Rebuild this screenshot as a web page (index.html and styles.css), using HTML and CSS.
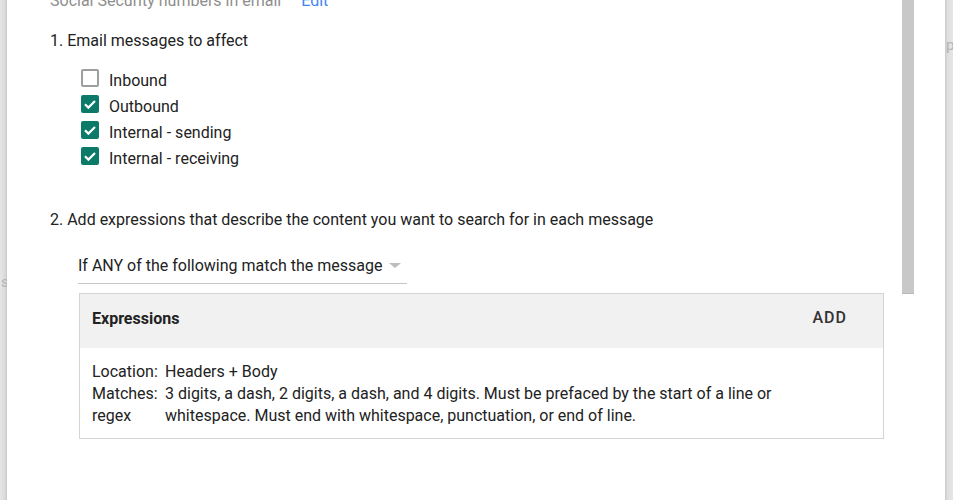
FILE: index.html
```html
<!DOCTYPE html>
<html lang="en">
<head>
  <meta charset="UTF-8" />
  <title>Content compliance</title>
  <link rel="stylesheet" href="styles.css">
</head>
<body>
  <div class="page">
    <div class="side side-left"><span class="ghost">s</span></div>

    <div class="dialog">
      <div class="scroll-thumb"></div>

      <div class="content">
        <p class="summary">Social Security numbers in email <a class="edit" href="#">Edit</a></p>

        <p class="step step-one">1. Email messages to affect</p>
        <ul class="checklist">
          <li class="check-row"><span class="box"></span>Inbound</li>
          <li class="check-row"><span class="box checked"><svg viewBox="0 0 18 18"><path d="M4 9.2l3.4 3.4L14 6" /></svg></span>Outbound</li>
          <li class="check-row"><span class="box checked"><svg viewBox="0 0 18 18"><path d="M4 9.2l3.4 3.4L14 6" /></svg></span>Internal - sending</li>
          <li class="check-row"><span class="box checked"><svg viewBox="0 0 18 18"><path d="M4 9.2l3.4 3.4L14 6" /></svg></span>Internal - receiving</li>
        </ul>

        <p class="step step-two">2. Add expressions that describe the content you want to search for in each message</p>

        <div class="select">
          <span>If ANY of the following match the message</span>
          <span class="caret"></span>
        </div>

        <div class="expressions">
          <div class="expr-head">
            <span class="expr-title">Expressions</span>
            <span class="expr-add">ADD</span>
          </div>
          <div class="expr-body">
            <span class="expr-label">Location:</span>
            <span class="expr-value">Headers + Body</span>
            <span class="expr-label">Matches:<br>regex</span>
            <span class="expr-value">3 digits, a dash, 2 digits, a dash, and 4 digits. Must be prefaced by the start of a line or whitespace. Must end with whitespace, punctuation, or end of line.</span>
          </div>
        </div>
      </div>
    </div>

    <div class="side side-right"><span class="ghost">p</span></div>
  </div>
</body>
</html>
```

FILE: styles.css
```css
body {
  margin: 0;
  font-family: Roboto, "Liberation Sans", sans-serif;
  font-size: 16px;
  color: #222;
  background: #e3e3e3;
  overflow: hidden;
}

.page {
  display: flex;
  height: 500px;
}

.side {
  flex: none;
  background: #e4e4e4;
  color: #b4b4b4;
  font-size: 15px;
  line-height: 20px;
  overflow: hidden;
}

.side-left {
  width: 7px;
  padding-top: 272px;
  background: linear-gradient(90deg, #e6e6e6, #dadada 70%, #c9c9c9);
}

.side-left .ghost {
  margin-left: 1px;
}

.side-right {
  width: 8px;
  padding-top: 35px;
  background: linear-gradient(90deg, #c8c8c8, #dedede 30%, #e6e6e6);
}

.side-right .ghost {
  margin-left: 1px;
}

.dialog {
  flex: 1;
  position: relative;
  background: #fff;
  overflow: hidden;
}

.scroll-thumb {
  position: absolute;
  top: 0;
  right: 31px;
  width: 12px;
  height: 293px;
  background: #c8c8c8;
  border-bottom: 1px solid #b9b9b9;
}

.content {
  padding-left: 43px;
}

p {
  margin: 0;
  line-height: 20px;
}

.summary {
  margin-top: -9px;
  color: #8e8e8e;
}

.edit {
  color: #4285f4;
  text-decoration: none;
  margin-left: 16px;
}

.step-one {
  margin-top: 20px;
}

.checklist {
  list-style: none;
  margin: 17px 0 0 31px;
  padding: 0;
}

.check-row {
  display: flex;
  align-items: flex-start;
  gap: 10px;
  height: 26px;
  line-height: 26px;
}

.box {
  flex: none;
  width: 18px;
  height: 18px;
  margin-top: 1px;
  box-sizing: border-box;
  border: 2px solid #9e9e9e;
  border-radius: 2px;
}

.box.checked {
  background: #0b7a68;
  border-color: #0b7a68;
}

.box svg {
  display: block;
  width: 18px;
  height: 18px;
  margin: -2px;
}

.box path {
  fill: none;
  stroke: #fff;
  stroke-width: 2.2;
}

.step-two {
  margin-top: 38px;
}

.select {
  display: flex;
  align-items: center;
  width: 329px;
  margin: 26px 0 0 28px;
  padding-bottom: 7px;
  line-height: 20px;
  border-bottom: 1px solid #c6c6c6;
}

.caret {
  margin-left: 7px;
  margin-top: -2px;
  border-left: 6px solid transparent;
  border-right: 6px solid transparent;
  border-top: 5px solid #bdbdbd;
}

.expressions {
  width: 805px;
  box-sizing: border-box;
  margin: 9px 0 0 29px;
  border: 1px solid #d4d4d4;
}

.expr-head {
  display: flex;
  justify-content: space-between;
  align-items: flex-start;
  height: 54px;
  box-sizing: border-box;
  padding: 15px 36px 0 12px;
  background: #f1f1f1;
  line-height: 20px;
}

.expr-title {
  font-weight: 700;
}

.expr-add {
  font-weight: 500;
  letter-spacing: 1px;
  color: #333;
  margin-top: -1px;
}

.expr-body {
  display: grid;
  grid-template-columns: 73px 620px;
  padding: 13px 12px 11px;
  line-height: 22px;
}
```
